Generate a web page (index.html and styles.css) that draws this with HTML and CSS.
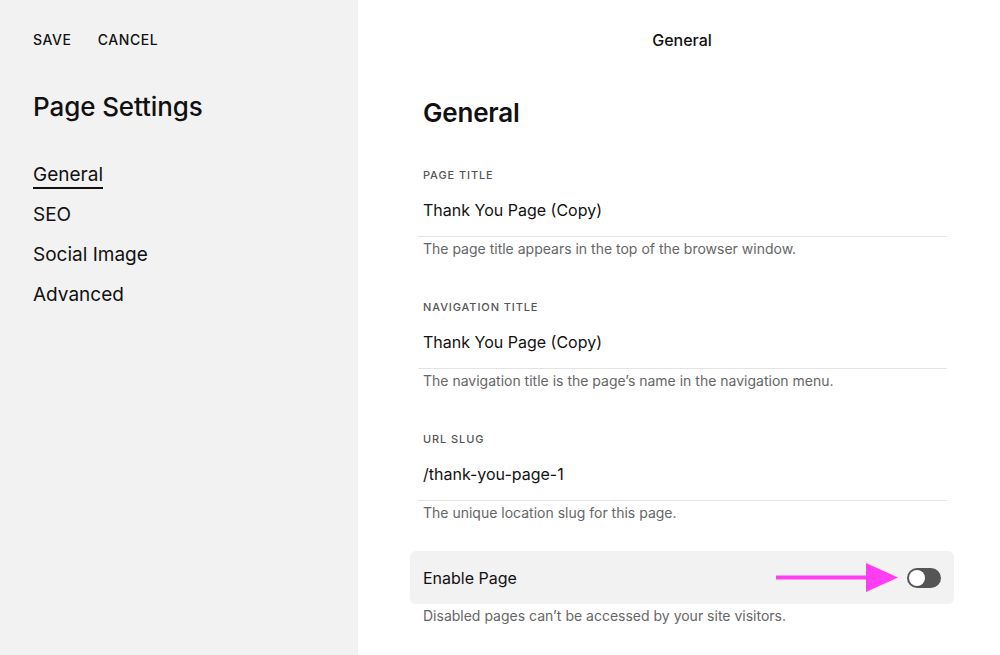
FILE: index.html
```html
<!DOCTYPE html>
<html>
<head>
<meta charset="utf-8">
<link rel="stylesheet" href="styles.css">
</head>
<body>
<div class="app">
  <aside class="sidebar">
    <div class="actions">
      <span class="action">SAVE</span>
      <span class="action">CANCEL</span>
    </div>
    <h1 class="side-title">Page Settings</h1>
    <nav class="nav">
      <span class="nav-item active">General</span>
      <span class="nav-item">SEO</span>
      <span class="nav-item">Social Image</span>
      <span class="nav-item">Advanced</span>
    </nav>
  </aside>
  <main class="main">
    <div class="topbar">General</div>
    <div class="content">
      <h2 class="heading">General</h2>
      <div class="field">
        <div class="label">PAGE TITLE</div>
        <div class="value">Thank You Page (Copy)</div>
        <div class="help">The page title appears in the top of the browser window.</div>
      </div>
      <div class="field">
        <div class="label">NAVIGATION TITLE</div>
        <div class="value">Thank You Page (Copy)</div>
        <div class="help">The navigation title is the page’s name in the navigation menu.</div>
      </div>
      <div class="field">
        <div class="label">URL SLUG</div>
        <div class="value">/thank-you-page-1</div>
        <div class="help">The unique location slug for this page.</div>
      </div>
      <div class="toggle-row">
        <span class="toggle-label">Enable Page</span>
        <div class="toggle-right">
          <svg class="arrow" width="124" height="30" viewBox="0 0 124 30">
            <rect x="0" y="12.5" width="92" height="4" fill="#ff3ef2"/>
            <polygon points="90,0 122,14.5 90,29" fill="#ff3ef2"/>
          </svg>
          <span class="switch"><span class="knob"></span></span>
        </div>
      </div>
      <div class="help toggle-help">Disabled pages can’t be accessed by your site visitors.</div>
    </div>
  </main>
</div>
</body>
</html>
```
FILE: styles.css
```css
* { box-sizing: border-box; }
html, body { margin: 0; padding: 0; }
body {
  font-family: Inter, "Noto Sans", sans-serif;
  color: #111;
  width: 1000px;
  height: 655px;
  overflow: hidden;
}
.app {
  display: flex;
  height: 655px;
}
.sidebar {
  width: 358px;
  flex-shrink: 0;
  background: #f2f2f2;
  padding: 31px 0 0 33px;
}
.actions {
  display: flex;
  gap: 26px;
}
.action {
  font-size: 14px;
  font-weight: 500;
  letter-spacing: 0.6px;
  line-height: 18px;
}
.side-title {
  margin: 41px 0 0 0;
  font-size: 26px;
  font-weight: 500;
  line-height: 34px;
  letter-spacing: -0.1px;
}
.nav {
  display: flex;
  flex-direction: column;
  align-items: flex-start;
  margin-top: 39px;
  gap: 16px;
}
.nav-item {
  font-size: 19px;
  line-height: 24px;
  font-weight: 400;
}
.nav-item.active {
  border-bottom: 2.5px solid #111;
  line-height: 24px;
  padding-bottom: 0;
  margin-bottom: -2.5px;
}
.main {
  flex: 1;
  background: #fff;
}
.topbar {
  text-align: center;
  font-size: 16px;
  font-weight: 500;
  padding-top: 30px;
  line-height: 20px;
  padding-left: 6px;
}
.content {
  padding: 0 46px 0 52px;
}
.heading {
  margin: 46px 0 0 13px;
  font-size: 26px;
  font-weight: 600;
  line-height: 34px;
  letter-spacing: -0.2px;
}
.field {
  margin-top: 38px;
}
.field + .field { margin-top: 42px; }
.label {
  padding-left: 13px;
  font-size: 11px;
  font-weight: 500;
  letter-spacing: 0.9px;
  color: #555;
  line-height: 14px;
}
.value {
  padding: 18px 0 16px 5px;
  font-size: 16px;
  line-height: 20px;
  border-bottom: 1px solid #e3e3e3;
  margin: 0 7px 0 8px;
}
.help {
  padding-left: 13px;
  margin-top: 3px;
  font-size: 14px;
  color: #666;
  line-height: 18px;
}
.toggle-row {
  margin-top: 29px;
  height: 53px;
  background: #f2f2f2;
  border-radius: 6px;
  display: flex;
  align-items: center;
  justify-content: space-between;
  padding: 0 13px;
}
.toggle-label {
  font-size: 16px;
  line-height: 20px;
}
.toggle-right {
  display: flex;
  align-items: center;
  gap: 7px;
}
.arrow { display: block; }
.switch {
  width: 34px;
  height: 20px;
  border-radius: 10px;
  background: #555;
  position: relative;
  display: block;
}
.knob {
  position: absolute;
  left: 2px;
  top: 2px;
  width: 16px;
  height: 16px;
  border-radius: 50%;
  background: #fff;
}
.toggle-help {
  margin-top: 3px;
}
```
